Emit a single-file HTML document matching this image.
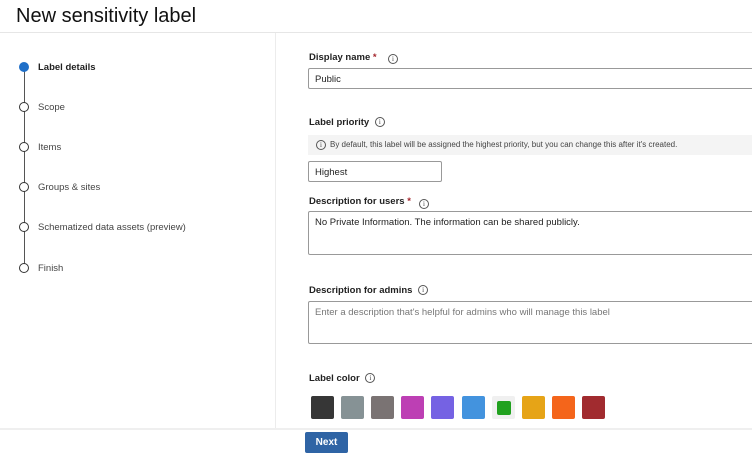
<!DOCTYPE html>
<html><head><style>
body{margin:0;width:752px;height:454px;overflow:hidden;font-family:"Segoe UI","Liberation Sans",sans-serif;background:#fff;color:#222;position:relative}
.a{position:absolute}
h1{position:absolute;left:16px;top:5px;margin:0;font-size:20px;font-weight:400;color:#111}
.step{position:absolute;left:38px;font-size:9.5px;color:#444}
.c{position:absolute;left:19px;width:8px;height:8px;border:1.6px solid #333;border-radius:50%;background:#fff}
.lbl{position:absolute;left:309px;font-size:9.5px;font-weight:600;color:#222}
.box{position:absolute;border:1px solid #999;border-radius:2px;font-size:9.5px;padding:5px 6px;box-sizing:border-box}
.i{display:inline-block;width:8px;height:8px;border:1px solid #555;border-radius:50%;font-size:7px;line-height:8px;text-align:center;font-weight:400;vertical-align:middle;font-family:"Liberation Serif",serif;color:#444}
.sw{position:absolute;top:396px;width:23px;height:23px;border-radius:2px}
</style></head><body>
<h1>New sensitivity label</h1>
<div class="a" style="left:0;top:32px;width:752px;height:1px;background:#e6e6e6"></div>
<div class="a" style="left:275px;top:33px;width:1px;height:395px;background:#ececec"></div>
<div class="a" style="left:23.5px;top:70px;width:1px;height:198px;background:#555"></div>
<div class="c" style="top:62px;background:#1f6fc8;border-color:#1f6fc8"></div>
<div class="c" style="top:102px"></div><div class="c" style="top:142px"></div><div class="c" style="top:182px"></div><div class="c" style="top:222px"></div><div class="c" style="top:263px"></div>
<div class="step" style="top:62px;font-weight:700;color:#222">Label details</div>
<div class="step" style="top:102px">Scope</div>
<div class="step" style="top:142px">Items</div>
<div class="step" style="top:182px">Groups &amp; sites</div>
<div class="step" style="top:222px">Schematized data assets (preview)</div>
<div class="step" style="top:263px">Finish</div>

<div class="lbl" style="top:52px">Display name <span style="color:#a4262c">*</span></div>
<div class="a" style="left:388px;top:50px"><span class="i">i</span></div>
<div class="box" style="left:308px;top:68px;width:450px;height:21px">Public</div>
<div class="lbl" style="top:117px">Label priority <span class="i" style="margin-left:3px">i</span></div>
<div class="a" style="left:308px;top:135px;width:444px;height:20px;background:#f4f4f4;font-size:8px;color:#444;line-height:20px;padding-left:8px"><span class="i" style="margin-right:4px">i</span>By default, this label will be assigned the highest priority, but you can change this after it's created.</div>
<div class="box" style="left:308px;top:161px;width:134px;height:21px">Highest</div>
<div class="lbl" style="top:196px">Description for users <span style="color:#a4262c">*</span></div>
<div class="a" style="left:419px;top:195px"><span class="i">i</span></div>
<div class="box" style="left:308px;top:211px;width:450px;height:44px">No Private Information. The information can be shared publicly.</div>
<div class="lbl" style="top:285px">Description for admins <span class="i" style="margin-left:3px">i</span></div>
<div class="box" style="left:308px;top:301px;width:450px;height:43px;color:#777">Enter a description that's helpful for admins who will manage this label</div>
<div class="lbl" style="top:373px">Label color <span class="i" style="margin-left:3px">i</span></div>
<div class="sw" style="left:311px;background:#363636"></div>
<div class="sw" style="left:341px;background:#869295"></div>
<div class="sw" style="left:371px;background:#7a7373"></div>
<div class="sw" style="left:401px;background:#bd3fb4"></div>
<div class="sw" style="left:431px;background:#7562e3"></div>
<div class="sw" style="left:462px;background:#4393de"></div>
<div class="sw" style="left:492px;background:#f0f0f0"></div>
<div class="a" style="left:497px;top:401px;width:14px;height:14px;border-radius:2px;background:#21a11f"></div>
<div class="sw" style="left:522px;background:#e6a417"></div>
<div class="sw" style="left:552px;background:#f4651b"></div>
<div class="sw" style="left:582px;background:#a12b2f"></div>
<div class="a" style="left:0;top:428px;width:752px;height:2px;background:#efefef"></div>
<div class="a" style="left:305px;top:432px;width:43px;height:21px;background:#2f64a5;border-radius:2px;color:#fff;font-size:10px;font-weight:600;text-align:center;line-height:21px">Next</div>
</body></html>
